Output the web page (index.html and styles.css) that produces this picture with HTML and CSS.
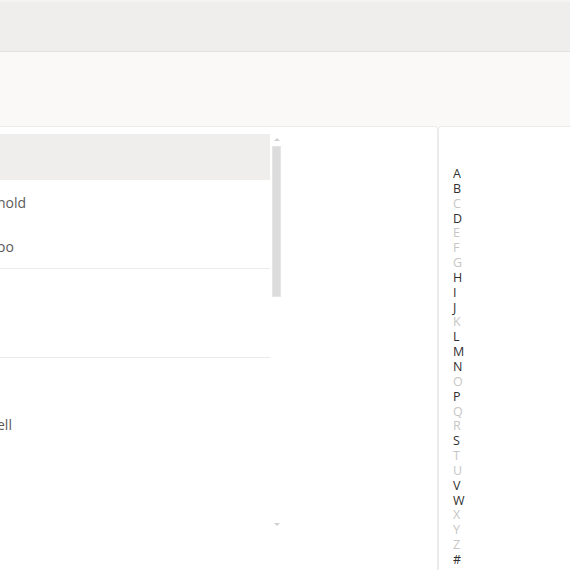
FILE: index.html
```html
<!DOCTYPE html>
<html lang="en">
<head>
<meta charset="utf-8">
<title>People</title>
<link rel="stylesheet" href="styles.css">
</head>
<body>
<div class="page">
  <header class="topbar"></header>
  <div class="subbar"></div>
  <main class="main">
    <section class="card list-card">
      <div class="list-area">
        <div class="list">
          <div class="list-header"></div>
          <div class="group">
            <div class="row"><span class="name">nold</span></div>
            <div class="row"><span class="name">oo</span></div>
          </div>
          <div class="group">
            <div class="row"></div>
            <div class="row"></div>
          </div>
          <div class="group last">
            <div class="row"></div>
            <div class="row"><span class="name">ell</span></div>
            <div class="row"></div>
            <div class="row"></div>
          </div>
        </div>
        <div class="scrollbar">
          <div class="arrow up"></div>
          <div class="thumb"></div>
          <div class="track"></div>
          <div class="arrow down"></div>
        </div>
      </div>
    </section>
    <aside class="card index-card">
      <ul class="alpha">
        <li class="on">A</li>
        <li class="on">B</li>
        <li>C</li>
        <li class="on">D</li>
        <li>E</li>
        <li>F</li>
        <li>G</li>
        <li class="on">H</li>
        <li class="on">I</li>
        <li class="on">J</li>
        <li>K</li>
        <li class="on">L</li>
        <li class="on">M</li>
        <li class="on">N</li>
        <li>O</li>
        <li class="on">P</li>
        <li>Q</li>
        <li>R</li>
        <li class="on">S</li>
        <li>T</li>
        <li>U</li>
        <li class="on">V</li>
        <li class="on">W</li>
        <li>X</li>
        <li>Y</li>
        <li>Z</li>
        <li class="on">#</li>
      </ul>
    </aside>
  </main>
</div>
</body>
</html>
```
FILE: styles.css
```css
* { box-sizing: border-box; }
html, body {
  margin: 0;
  padding: 0;
  width: 570px;
  height: 570px;
  overflow: hidden;
  background: #faf9f8;
  font-family: "Open Sans", "Noto Sans", "Liberation Sans", sans-serif;
}
.page {
  display: flex;
  flex-direction: column;
  height: 570px;
}
.topbar {
  height: 52px;
  background: #efeeec;
  border-top: 2px solid #f5f4f3;
  border-bottom: 1px solid #e3e1df;
}
.subbar {
  height: 74px;
  background: #faf9f8;
}
.main {
  flex: 1;
  display: flex;
  min-height: 0;
}
.card {
  background: #ffffff;
  border-top: 1px solid #edebe9;
}
.list-card {
  width: 438px;
  border-right: 1px solid #edebe9;
  border-top-right-radius: 4px;
  padding-top: 7px;
}
.index-card {
  flex: 1;
  border-left: 1px solid #edebe9;
  border-top-left-radius: 4px;
  padding: 40px 0 0 14px;
}
.list-area {
  display: flex;
  height: 400px;
}
.list {
  width: 270px;
  overflow: hidden;
}
.list-header {
  height: 46px;
  background: #efeeec;
}
.group {
  border-bottom: 1px solid #edebe9;
}
.group.last {
  border-bottom: none;
}
.row {
  height: 44px;
  display: flex;
  align-items: center;
  font-size: 14px;
  color: #5c5b59;
  white-space: nowrap;
}
.name {
  margin-left: -3px;
}
.scrollbar {
  width: 9px;
  margin-left: 2px;
  display: flex;
  flex-direction: column;
  align-items: center;
}
.arrow {
  width: 0;
  height: 0;
  border-left: 3px solid transparent;
  border-right: 3px solid transparent;
}
.arrow.up {
  margin-top: 4px;
  border-bottom: 3px solid #d2d0ce;
}
.arrow.down {
  margin-bottom: 8px;
  border-top: 3px solid #d2d0ce;
}
.thumb {
  margin-top: 5px;
  width: 9px;
  height: 151px;
  background: #dcdcdc;
  border: 1px solid #e6e6e6;
}
.track {
  flex: 1;
}
.alpha {
  list-style: none;
  margin: 0;
  padding: 0;
  font-size: 12.5px;
  line-height: 14.85px;
  color: #c8c6c4;
}
.alpha li.on {
  color: #323130;
}
```
